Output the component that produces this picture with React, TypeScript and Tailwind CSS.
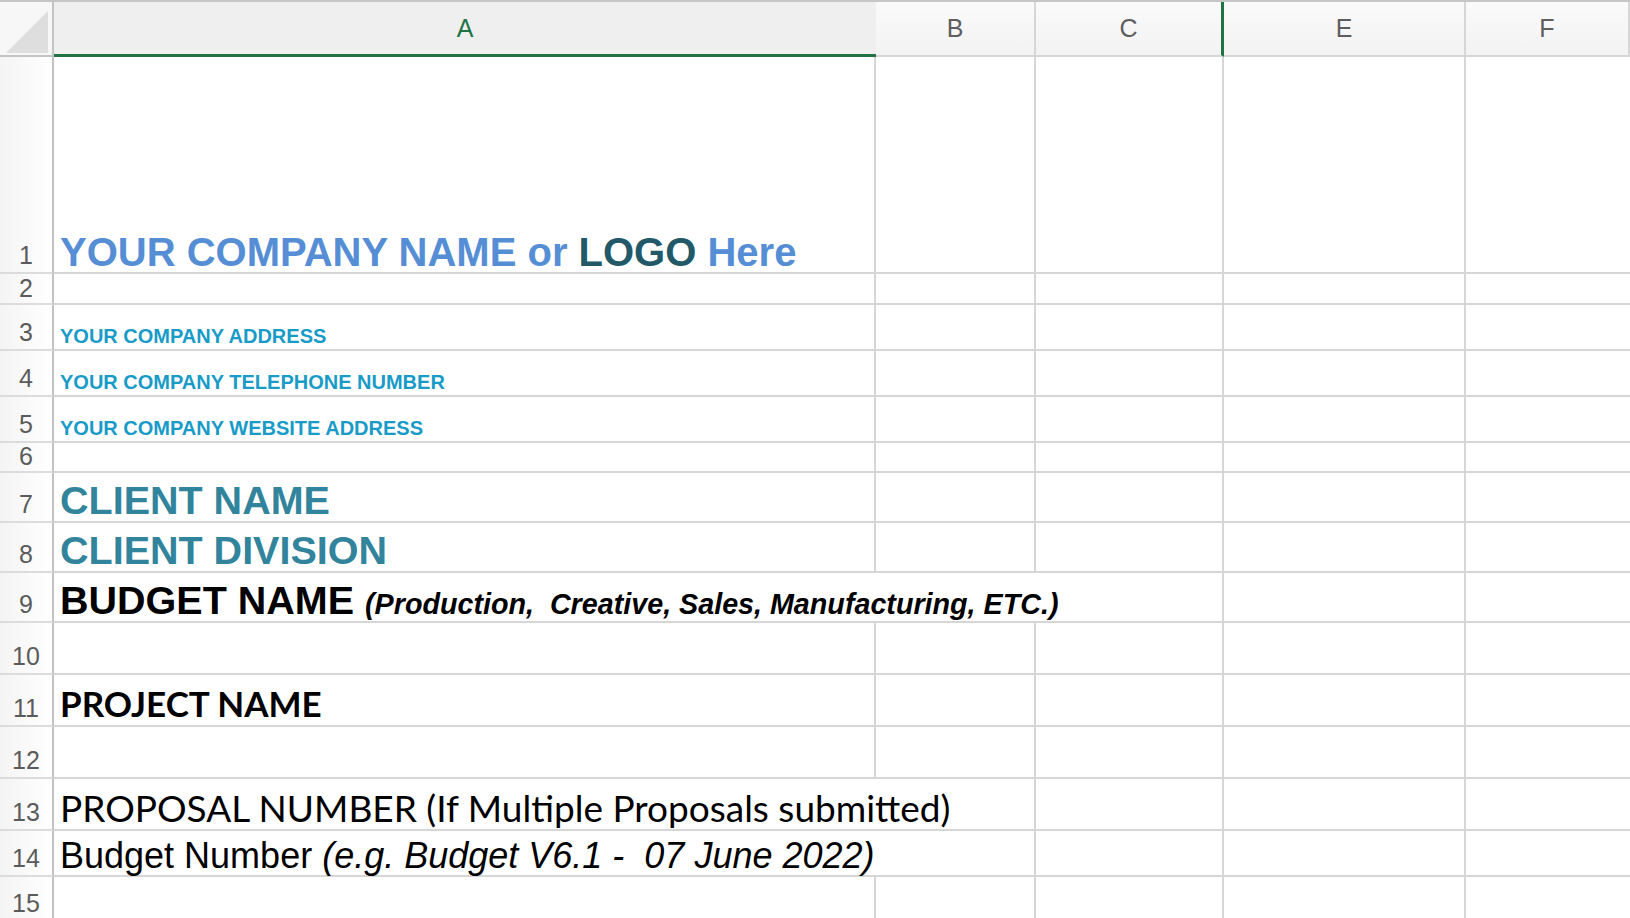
import type { ReactNode } from "react";

type Row = {
  n: number;
  h: string;
  numPad: string;
  // which grid lines are hidden because the text runs over them
  overflow?: "A" | "AB";
  content?: ReactNode;
};

const arial = "font-['Liberation_Sans',Arial,sans-serif]";
const lato = "font-['Lato','Carlito',sans-serif]";

const rows: Row[] = [
  {
    n: 1,
    h: "h-[217px]",
    numPad: "pb-[4px]",
    content: (
      <p className={`${arial} pb-0 text-[40px] leading-none font-bold text-[#558ED5]`}>
        YOUR COMPANY NAME or <span className="text-[#215968]">LOGO</span> Here
      </p>
    ),
  },
  { n: 2, h: "h-[31px]", numPad: "pb-[2px]" },
  {
    n: 3,
    h: "h-[46px]",
    numPad: "pb-[4px]",
    content: (
      <p className={`${arial} pb-[3px] text-[20px] leading-none font-bold text-[#199BC8]`}>
        YOUR COMPANY ADDRESS
      </p>
    ),
  },
  {
    n: 4,
    h: "h-[46px]",
    numPad: "pb-[4px]",
    content: (
      <p className={`${arial} pb-[3px] text-[20px] leading-none font-bold text-[#199BC8]`}>
        YOUR COMPANY TELEPHONE NUMBER
      </p>
    ),
  },
  {
    n: 5,
    h: "h-[46px]",
    numPad: "pb-[4px]",
    content: (
      <p className={`${arial} pb-[3px] text-[20px] leading-none font-bold text-[#199BC8]`}>
        YOUR COMPANY WEBSITE ADDRESS
      </p>
    ),
  },
  { n: 6, h: "h-[30px]", numPad: "pb-[2px]" },
  {
    n: 7,
    h: "h-[50px]",
    numPad: "pb-[4px]",
    content: (
      <p className={`${arial} pb-[1px] text-[39.5px] leading-none font-bold text-[#31849B]`}>
        CLIENT NAME
      </p>
    ),
  },
  {
    n: 8,
    h: "h-[50px]",
    numPad: "pb-[4px]",
    content: (
      <p className={`${arial} pb-[1px] text-[39.5px] leading-none font-bold text-[#31849B]`}>
        CLIENT DIVISION
      </p>
    ),
  },
  {
    n: 9,
    h: "h-[50px]",
    numPad: "pb-[4px]",
    overflow: "AB",
    content: (
      <p className={`${arial} pb-[1px] text-[39.5px] leading-none font-bold text-black`}>
        BUDGET NAME{" "}
        <span className="text-[28.7px] italic">
          (Production,&nbsp; Creative, Sales, Manufacturing, ETC.)
        </span>
      </p>
    ),
  },
  { n: 10, h: "h-[52px]", numPad: "pb-[4px]" },
  {
    n: 11,
    h: "h-[52px]",
    numPad: "pb-[4px]",
    content: (
      <p className={`${lato} pb-[4px] text-[35px] leading-none font-bold text-black`}>
        PROJECT NAME
      </p>
    ),
  },
  { n: 12, h: "h-[52px]", numPad: "pb-[4px]" },
  {
    n: 13,
    h: "h-[52px]",
    numPad: "pb-[4px]",
    overflow: "A",
    content: (
      <p className={`${lato} pb-[3px] text-[37px] leading-none text-black`}>
        PROPOSAL NUMBER (If Multiple Proposals submitted)
      </p>
    ),
  },
  {
    n: 14,
    h: "h-[46px]",
    numPad: "pb-[4px]",
    overflow: "A",
    content: (
      <p className={`${arial} pb-[1px] text-[36px] leading-none text-black`}>
        Budget Number{" "}
        <span className="italic">(e.g. Budget V6.1 -&nbsp; 07 June 2022)</span>
      </p>
    ),
  },
  { n: 15, h: "h-[46px]", numPad: "pb-[5px]" },
];

const columns = [
  { label: "B", w: "w-[160px]" },
  { label: "C", w: "w-[188px]" },
  { label: "E", w: "w-[242px]" },
  { label: "F", w: "flex-1" },
];

function ColumnHeader() {
  return (
    <div className={`${arial} flex h-[57px] shrink-0 border-t-2 border-[#c6c6c6] text-[25px] leading-none`}>
      <div className="flex w-[54px] shrink-0 items-end justify-end border-r-2 border-b-2 border-[#c4c4c4] bg-[#f7f7f7] pr-[4px] pb-[2px]">
        <svg width="44" height="42" viewBox="0 0 44 42">
          <polygon points="2,42 44,42 44,0" fill="#dedede" />
        </svg>
      </div>
      <div className="flex w-[822px] shrink-0 items-center justify-center border-b-[3px] border-[#217346] bg-[#efefef] pt-[1px] text-[#217346]">
        A
      </div>
      {columns.map((col) => (
        <div
          key={col.label}
          className={`${col.w} flex shrink-0 items-center justify-center border-r-2 border-b-2 border-[#d6d6d6] bg-gradient-to-b from-[#fafafa] to-[#f3f3f3] text-[#5e5e5e] ${
            col.label === "C" ? "border-r-[3px] border-r-[#217346]" : ""
          }`}
        >
          {col.label}
        </div>
      ))}
    </div>
  );
}

function SheetRow({ row }: { row: Row }) {
  const line = "border-b-2 border-[#d6d6d6]";
  return (
    <div className={`${row.h} flex shrink-0`}>
      <div
        className={`${arial} ${row.numPad} flex w-[54px] shrink-0 items-end justify-center border-r-2 border-b-2 border-r-[#c2c2c2] border-b-[#dcdcdc] bg-gradient-to-r from-[#f4f4f4] to-white text-[25px] leading-none text-[#5b5b5b]`}
      >
        {row.n}
      </div>
      <div
        className={`${line} relative z-10 flex w-[822px] shrink-0 items-end pl-[6px] whitespace-nowrap ${
          row.overflow ? "" : "border-r-2"
        }`}
      >
        {row.content}
      </div>
      <div className={`${line} w-[160px] shrink-0 ${row.overflow === "AB" ? "" : "border-r-2"}`} />
      <div className={`${line} w-[188px] shrink-0 border-r-2`} />
      <div className={`${line} w-[242px] shrink-0 border-r-2`} />
      <div className={`${line} flex-1`} />
    </div>
  );
}

export default function App() {
  return (
    <div className="flex h-[918px] w-[1630px] flex-col overflow-hidden bg-white">
      <ColumnHeader />
      {rows.map((row) => (
        <SheetRow key={row.n} row={row} />
      ))}
    </div>
  );
}
